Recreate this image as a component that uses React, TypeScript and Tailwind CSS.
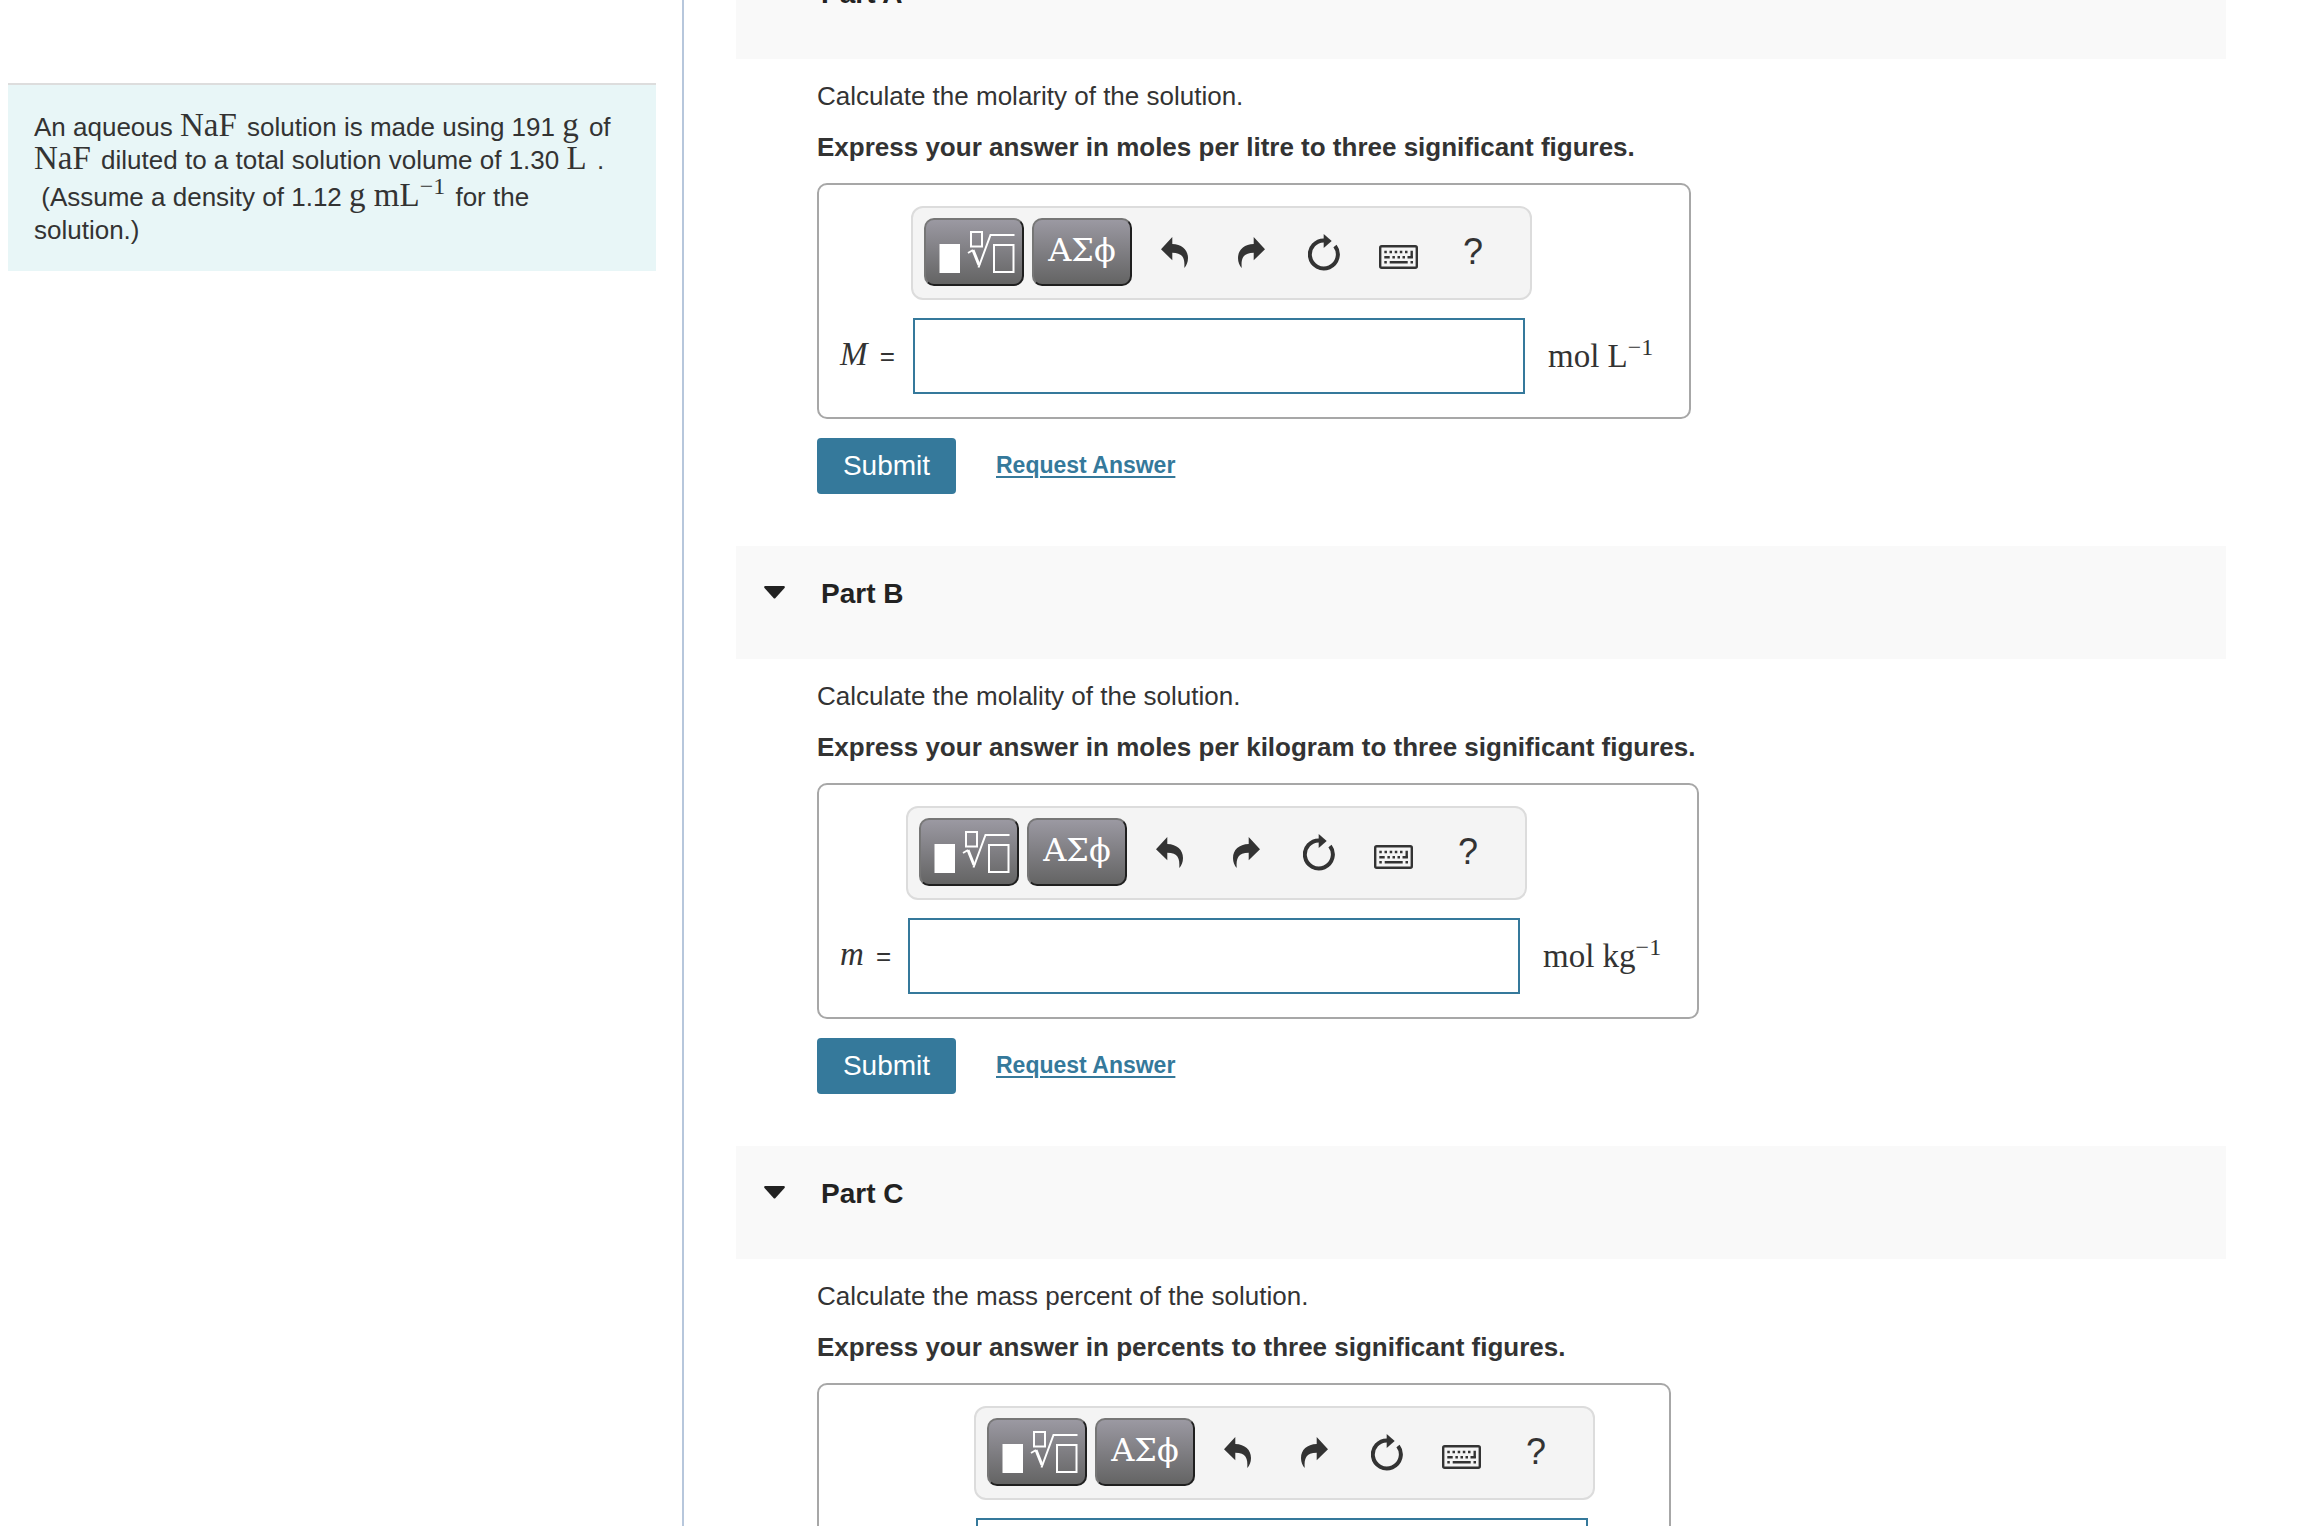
import { ReactNode } from 'react';

interface Part {
  id: string;
  title: string;
  question: ReactNode;
  hint: string;
  symbol: ReactNode;
  unit: ReactNode;
  boxClass: string;
  labelClass: string;
}

const parts: Part[] = [
  {
    id: 'a',
    title: 'Part A',
    question: 'Calculate the molarity of the solution.',
    hint: 'Express your answer in moles per litre to three significant figures.',
    symbol: <Tex italic>M</Tex>,
    unit: (
      <Tex>
        mol L<Power>−1</Power>
      </Tex>
    ),
    boxClass: 'w-[874px]',
    labelClass: 'w-[71px]',
  },
  {
    id: 'b',
    title: 'Part B',
    question: 'Calculate the molality of the solution.',
    hint: 'Express your answer in moles per kilogram to three significant figures.',
    symbol: <Tex italic>m</Tex>,
    unit: (
      <Tex>
        mol kg<Power>−1</Power>
      </Tex>
    ),
    boxClass: 'w-[882px]',
    labelClass: 'w-[66px]',
  },
  {
    id: 'c',
    title: 'Part C',
    question: 'Calculate the mass percent of the solution.',
    hint: 'Express your answer in percents to three significant figures.',
    symbol: 'percent',
    unit: '%',
    boxClass: 'w-[854px]',
    labelClass: 'w-[134px]',
  },
];

function Tex({ children, italic }: { children: ReactNode; italic?: boolean }) {
  return (
    <span
      className={`font-['Liberation_Serif',serif] text-[33px] leading-0 ${italic ? 'mr-[5px] italic' : 'mr-[3px]'}`}
    >
      {children}
    </span>
  );
}

function Power({ children }: { children: ReactNode }) {
  return <sup className="text-[24px] leading-0">{children}</sup>;
}

function TemplateIcon() {
  return (
    <svg width="76" height="43" viewBox="0 0 76 43" fill="none" stroke="#fff" strokeWidth="2">
      <rect x="0.5" y="13" width="20.500" height="29" fill="#fff" stroke="none" />
      <rect x="32" y="1" width="11" height="14.500" />
      <path d="M29 22l5-3" />
      <path d="M34 19l6 15" strokeWidth="3" />
      <path d="M39.500 36.500L51.500 4h24" />
      <rect x="55" y="14" width="19.500" height="27" />
    </svg>
  );
}

function UndoIcon({ className = '' }: { className?: string }) {
  return (
    <svg className={className} width="27" height="31" viewBox="0 0 27 31" fill="#333">
      <path d="M0 12.3 11.3 0v7C21 7.2 27 13 27 21c0 4-1.400 7.500-3.700 10C24 21 22 16 11.300 15.700v7.600z" />
    </svg>
  );
}

function ResetIcon() {
  return (
    <svg width="32" height="37" viewBox="0 0 32 37" fill="none">
      <path d="M17 6.500A14 14 0 1 0 27 12" stroke="#333" strokeWidth="4" />
      <path d="M15.700 0l8 7-8 7z" fill="#333" />
    </svg>
  );
}

function KeyboardIcon() {
  return (
    <svg width="39" height="24" viewBox="0 0 39 24" fill="none" stroke="#333" strokeWidth="2.400">
      <rect x="1.200" y="1.200" width="36.600" height="21.600" rx="1.500" />
      <path d="M5.300 7h2.500M10.500 7h2.500M15.700 7h2.500M20.800 7h2.500M26 7h2.500M32.700 5.800V13" />
      <path d="M5.300 12.200h5.400M13.400 12.200h2.500M18.500 12.200h2.500M23.500 12.200h2.500M28.500 12.200h5.400" />
      <path d="M5.300 17.300h2.500M10.700 17.300h18M31.500 17.300h2.500" />
    </svg>
  );
}

const paletteButton =
  'flex h-[68px] w-[100px] items-center rounded-[10px] border-2 border-t-[#767676] border-l-[#767676] border-r-[#1f1f1f] border-b-[#1f1f1f] bg-linear-to-b from-[#9b99a2] to-[#646464] text-white';

function Toolbar() {
  return (
    <div className="flex h-[94px] w-[621px] rounded-xl border-2 border-[#dcdcdc] bg-[#f4f4f4] pt-[10px] pl-[11px]">
      <button type="button" aria-label="Templates" className={`${paletteButton} mr-2 pl-[13px]`}>
        <TemplateIcon />
      </button>
      <button
        type="button"
        aria-label="Symbols"
        className={`${paletteButton} mr-[9px] justify-center pb-1 font-['DejaVu_Serif',serif] text-[32px]`}
      >
        ΑΣϕ
      </button>
      <div className="flex h-[68px] items-center">
        <button type="button" aria-label="Undo" className="flex w-[66px] justify-center">
          <UndoIcon />
        </button>
        <button type="button" aria-label="Redo" className="flex w-[88px] justify-center">
          <UndoIcon className="-scale-x-100" />
        </button>
        <button type="button" aria-label="Reset" className="flex w-[58px] justify-center">
          <ResetIcon />
        </button>
        <button type="button" aria-label="Keyboard shortcuts" className="flex w-[90px] justify-center pt-[10px]">
          <KeyboardIcon />
        </button>
        <button type="button" aria-label="Help" className="w-[60px] text-[36px] leading-none">
          ?
        </button>
      </div>
    </div>
  );
}

function AnswerPart({ part }: { part: Part }) {
  return (
    <section className="pb-[52px]">
      <header className="flex h-[113px] items-start bg-[#f9f9f9] pt-8 pl-7">
        <button type="button" aria-label={`Collapse ${part.title}`} className="flex h-7 w-[57px] items-center">
          <svg width="21" height="13" viewBox="0 0 21 13" fill="#222">
            <path d="M1 0h19q1.500.500.500 2L11.500 12q-1 1-2 0L.500 2Q-.500.500 1 0z" />
          </svg>
        </button>
        <h2 className="text-[28px] leading-8 font-bold text-[#222]">{part.title}</h2>
      </header>
      <div className="pt-[22px] pl-[81px]">
        <p className="leading-[30px]">{part.question}</p>
        <p className="mt-[21px] leading-[30px] font-bold">{part.hint}</p>
        <div className={`mt-[21px] rounded-[10px] border-2 border-[#a7a7a7] pt-[21px] pb-[23px] pl-[21px] ${part.boxClass}`}>
          <div className="flex">
            <div className={part.labelClass} />
            <Toolbar />
          </div>
          <div className="mt-[18px] flex items-center">
            <label htmlFor={`answer-${part.id}`} className={`shrink-0 whitespace-nowrap ${part.labelClass}`}>
              {part.symbol} =
            </label>
            <input
              id={`answer-${part.id}`}
              type="text"
              className="ml-[2px] h-[76px] w-[612px] shrink-0 border-2 border-[#35799b] bg-white px-3 outline-none"
            />
            <span className="ml-[23px] pt-1 whitespace-nowrap">{part.unit}</span>
          </div>
        </div>
        <div className="mt-[19px] flex items-center">
          <button type="button" className="h-14 w-[139px] rounded bg-[#35799b] text-[28px] text-white">
            Submit
          </button>
          <a href="#" className="ml-10 pb-[2px] text-[23px] font-bold text-[#35799b] underline decoration-2 underline-offset-3">
            Request Answer
          </a>
        </div>
      </div>
    </section>
  );
}

export default function App() {
  return (
    <div className="flex h-screen overflow-hidden bg-white font-['Liberation_Sans',Arial,sans-serif] text-[26px] text-[#333]">
      <aside className="w-[684px] shrink-0 border-r-2 border-[#b7c7dc] pt-[83px] pr-[26px] pl-2">
        <div className="border-t-2 border-[#dddddd] bg-[#e8f6f7] px-[26px] pt-[26px] pb-6 leading-[33px] whitespace-nowrap">
          <p>
            An aqueous <Tex>NaF</Tex> solution is made using 191 <Tex>g</Tex> of
            <br />
            <Tex>NaF</Tex> diluted to a total solution volume of 1.30 <Tex>L</Tex> .
          </p>
          <p className="mt-1">
            &nbsp;(Assume a density of 1.12{' '}
            <Tex>
              g mL<Power>−1</Power>
            </Tex>{' '}
            for the
            <br />
            solution.)
          </p>
        </div>
      </aside>
      <main className="min-w-0 flex-1 pr-[74px] pl-[52px]">
        <div className="-mt-[54px]">
          {parts.map((part) => (
            <AnswerPart key={part.id} part={part} />
          ))}
        </div>
      </main>
    </div>
  );
}
